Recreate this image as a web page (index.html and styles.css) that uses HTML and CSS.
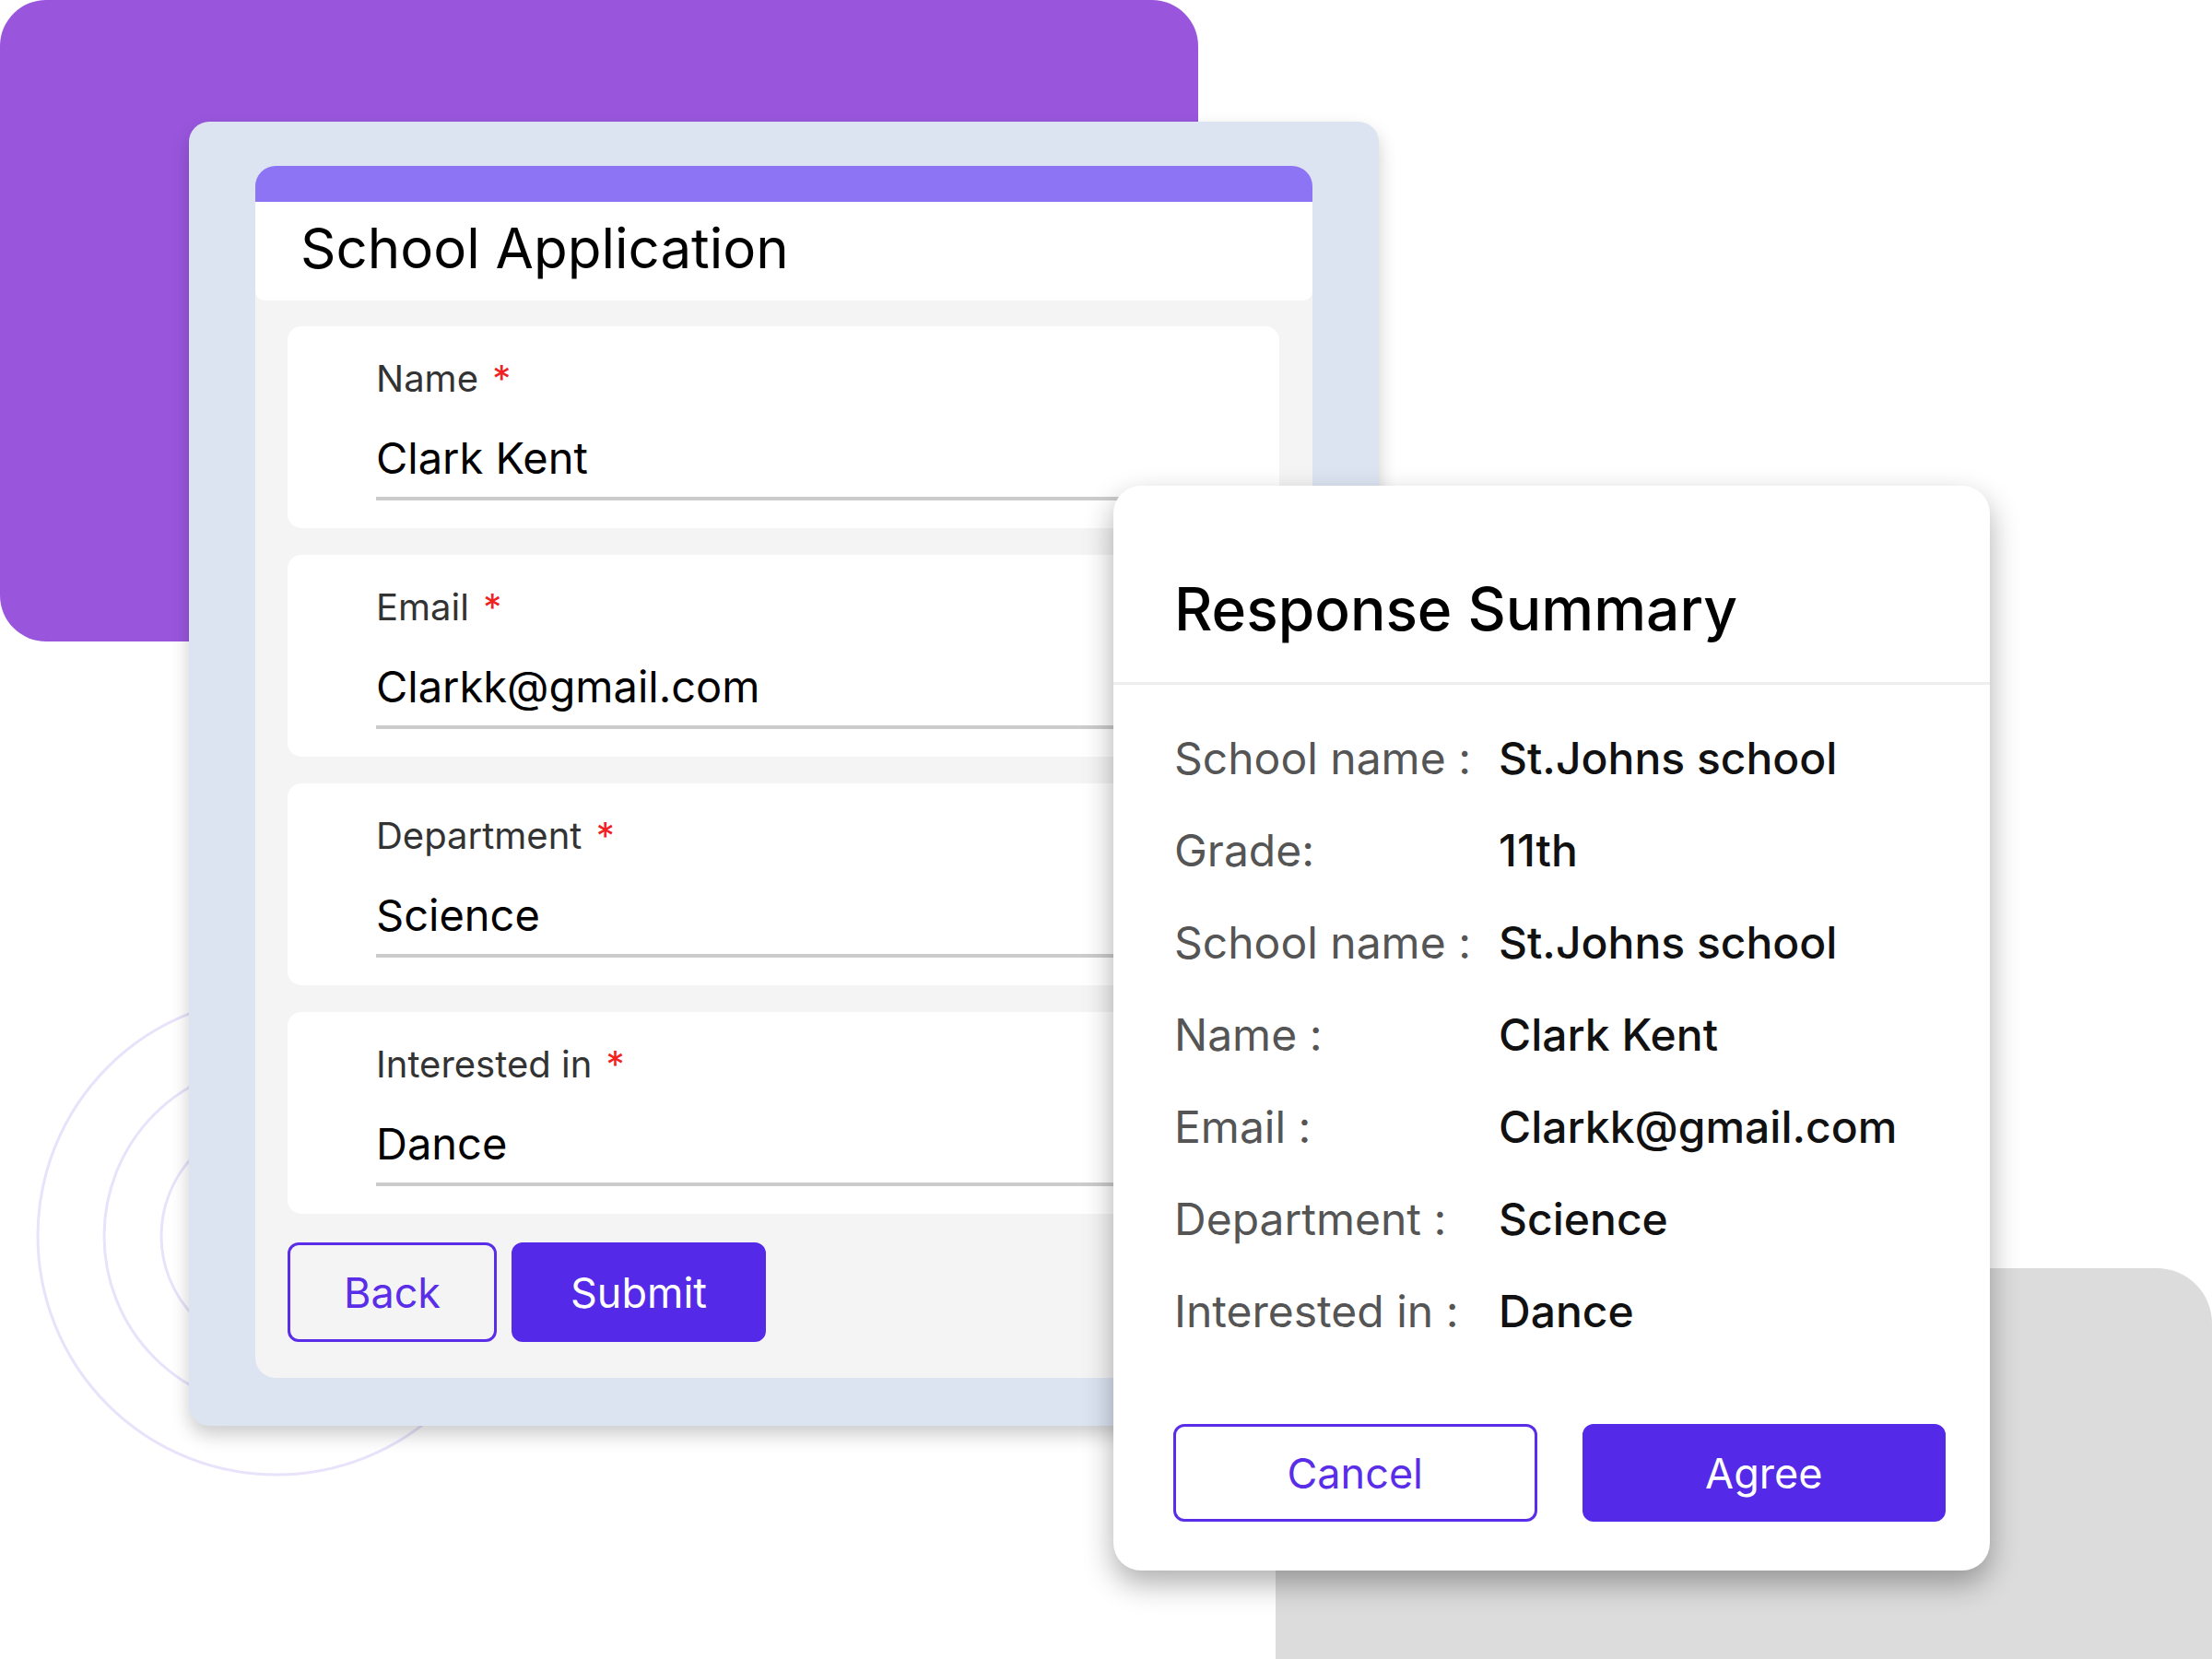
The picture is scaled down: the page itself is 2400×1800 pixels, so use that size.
FILE: index.html
```html
<!DOCTYPE html>
<html lang="en">
<head>
  <meta charset="UTF-8">
  <meta name="viewport" content="width=device-width, initial-scale=1.0">
  <title>School Application</title>
  <link rel="stylesheet" href="styles.css">
</head>
<body>
  <div class="stage">
    <!-- decorative background shapes -->
    <div class="blob blob-purple"></div>
    <div class="blob blob-gray"></div>
    <svg class="rings" width="700" height="700" viewBox="0 0 700 700">
      <circle cx="300" cy="341" r="259" />
      <circle cx="300" cy="341" r="187" />
      <circle cx="300" cy="341" r="125" />
    </svg>

    <div class="app-frame">
      <div class="form-card">
        <div class="form-strip"></div>
        <div class="form-header">
          <h1>School Application</h1>
        </div>
        <div class="form-body">
          <div class="field">
            <div class="field-label">Name <span class="req">*</span></div>
            <div class="field-value">Clark Kent</div>
          </div>
          <div class="field">
            <div class="field-label">Email <span class="req">*</span></div>
            <div class="field-value">Clarkk@gmail.com</div>
          </div>
          <div class="field">
            <div class="field-label">Department <span class="req">*</span></div>
            <div class="field-value">Science</div>
          </div>
          <div class="field">
            <div class="field-label">Interested in <span class="req">*</span></div>
            <div class="field-value">Dance</div>
          </div>
          <div class="form-actions">
            <button class="btn btn-outline btn-back">Back</button>
            <button class="btn btn-solid btn-submit">Submit</button>
          </div>
        </div>
      </div>
    </div>

    <div class="summary">
      <div class="summary-header">
        <h2>Response Summary</h2>
      </div>
      <div class="summary-rows">
        <div class="row-label">School name :</div><div class="row-value">St.Johns school</div>
        <div class="row-label">Grade:</div><div class="row-value">11th</div>
        <div class="row-label">School name :</div><div class="row-value">St.Johns school</div>
        <div class="row-label">Name :</div><div class="row-value">Clark Kent</div>
        <div class="row-label">Email :</div><div class="row-value">Clarkk@gmail.com</div>
        <div class="row-label">Department :</div><div class="row-value">Science</div>
        <div class="row-label">Interested in :</div><div class="row-value">Dance</div>
      </div>
      <div class="summary-actions">
        <button class="btn btn-outline">Cancel</button>
        <button class="btn btn-solid">Agree</button>
      </div>
    </div>
  </div>
</body>
</html>
```

FILE: styles.css
```css
body {
  margin: 0;
  background: #ffffff;
  font-family: Inter, "Noto Sans", sans-serif;
}

.stage {
  position: relative;
  width: 2400px;
  height: 1800px;
  overflow: hidden;
  background: #ffffff;
}

/* Background shapes */
.blob {
  position: absolute;
}

.blob-purple {
  left: 0;
  top: 0;
  width: 1300px;
  height: 696px;
  border-radius: 50px;
  background: #9956dd;
}

.blob-gray {
  left: 1384px;
  top: 1376px;
  width: 1016px;
  height: 520px;
  border-radius: 60px;
  background: #dcdcdc;
}

.rings {
  position: absolute;
  left: 0;
  top: 1000px;
}

.rings circle {
  fill: none;
  stroke: #e9e2fb;
  stroke-width: 3;
}

/* Application form */
.app-frame {
  position: absolute;
  left: 205px;
  top: 132px;
  width: 1291px;
  height: 1415px;
  box-sizing: border-box;
  padding: 48px 72px 52px;
  background: #dce4f2;
  border-radius: 22px;
  box-shadow: 0 10px 20px rgba(0, 0, 0, 0.2);
}

.form-card {
  height: 100%;
  display: flex;
  flex-direction: column;
  background: #f4f4f4;
  border-radius: 22px;
  overflow: hidden;
}

.form-strip {
  height: 39px;
  background: #8c74f5;
}

.form-header {
  background: #ffffff;
  padding: 14px 49px 21px;
  border-radius: 0 0 10px 10px;
}

.form-header h1 {
  margin: 0;
  font-size: 60px;
  line-height: 72px;
  font-weight: 400;
  color: #000000;
}

.form-body {
  display: flex;
  flex-direction: column;
  gap: 29px;
  padding: 28px 36px 0 35px;
}

.field {
  background: #ffffff;
  border-radius: 15px;
  padding: 33px 0 30px 96px;
}

.field-label {
  font-size: 40px;
  line-height: 48px;
  color: #333333;
}

.req {
  color: #f2201e;
  margin-left: 4px;
}

.field-value {
  margin-top: 33px;
  font-size: 47px;
  line-height: 57px;
  color: #000000;
  padding-bottom: 14px;
  border-bottom: 4px solid #cccccc;
}

.form-actions {
  display: flex;
  gap: 16px;
  margin-top: 2px;
}

/* Buttons */
.btn {
  box-sizing: border-box;
  height: 108px;
  border-radius: 12px;
  font-family: Inter, "Noto Sans", sans-serif;
  font-size: 45px;
  cursor: pointer;
}

.btn-outline {
  background: transparent;
  border: 3px solid #5a2ee8;
  color: #5a2ee8;
}

.btn-solid {
  background: #5429e8;
  border: 3px solid #5429e8;
  color: #ffffff;
}

.btn-back {
  width: 227px;
}

.btn-submit {
  width: 276px;
}

/* Response summary dialog */
.summary {
  position: absolute;
  left: 1208px;
  top: 527px;
  width: 951px;
  height: 1177px;
  box-sizing: border-box;
  background: #ffffff;
  border-radius: 30px;
  box-shadow: 0 14px 32px rgba(0, 0, 0, 0.32);
}

.summary-header {
  padding: 95px 66px 40px;
  border-bottom: 3px solid #eeeeee;
}

.summary-header h2 {
  margin: 0;
  font-size: 64px;
  line-height: 78px;
  font-weight: 500;
  color: #000000;
}

.summary-rows {
  display: grid;
  grid-template-columns: 352px 1fr;
  padding: 30px 66px 0;
  font-size: 48px;
  line-height: 100px;
}

.row-label {
  color: #555555;
}

.row-value {
  color: #111111;
  font-weight: 500;
}

.summary-actions {
  display: grid;
  grid-template-columns: 1fr 1fr;
  gap: 49px;
  padding: 72px 48px 0 65px;
}

.summary-actions .btn {
  height: 106px;
}
```
